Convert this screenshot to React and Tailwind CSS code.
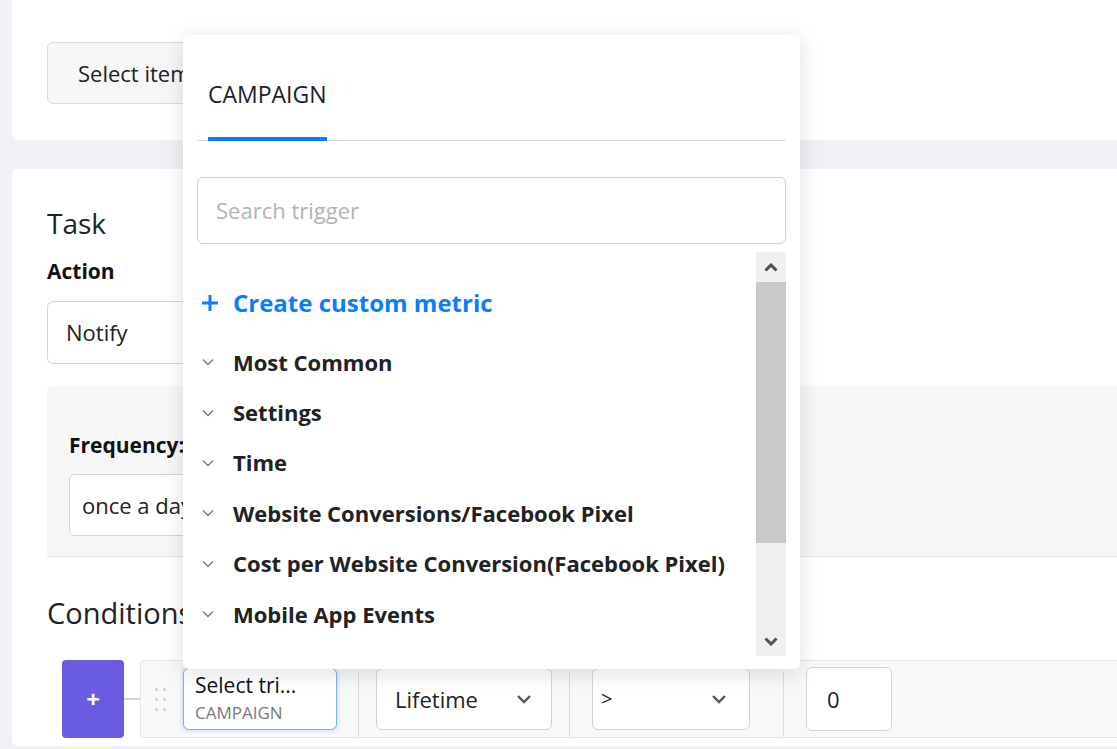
const FONT = { fontFamily: "'Open Sans', 'Noto Sans', sans-serif" };

function Chevron({ className = "" }) {
  return (
    <svg width="12" height="8" viewBox="0 0 12 8" className={className} fill="none" stroke="currentColor" strokeWidth="1.3">
      <polyline points="1 1.5 6 6.5 11 1.5" />
    </svg>
  );
}

function SelectChevron() {
  return (
    <svg width="16" height="10" viewBox="0 0 16 10" fill="none" stroke="#555" strokeWidth="2.4">
      <polyline points="2 2 8 8 14 2" />
    </svg>
  );
}

function ScrollArrow({ up }) {
  return (
    <svg width="14" height="9" viewBox="0 0 14 9" fill="none" stroke="#505050" strokeWidth="3">
      <polyline points={up ? "1.5 7.5 7 2 12.5 7.5" : "1.5 1.5 7 7 12.5 1.5"} />
    </svg>
  );
}

const groups = [
  "Most Common",
  "Settings",
  "Time",
  "Website Conversions/Facebook Pixel",
  "Cost per Website Conversion(Facebook Pixel)",
  "Mobile App Events",
];

function TriggerDropdown() {
  return (
    <div className="absolute left-[183px] top-[35px] w-[617px] h-[634px] bg-white rounded-md shadow-[0_4px_22px_rgba(0,0,0,0.13)] px-[14px] flex flex-col">
      {/* tabs */}
      <div className="border-b border-[#d8d8de] flex">
        <div className="ml-[11px] pt-[44px] pb-[28px] border-b-4 border-[#0a7cff] text-[23px] leading-[30px] text-[#222] -mb-px">
          CAMPAIGN
        </div>
      </div>

      <div className="mt-[36px] h-[67px] border border-[#cfcfd4] rounded-md flex items-center pl-[18px] text-[22px] text-[#b3b3b3]">
        Search trigger
      </div>

      <div className="mt-[8px] h-[404px] flex">
        <div className="flex-1 pt-[26px]">
          <div className="h-[50px] flex items-center pl-[5px] text-[#0a7cff] font-bold text-[24px]">
            <svg width="16" height="16" viewBox="0 0 16 16" stroke="currentColor" strokeWidth="3" className="mr-[15px]">
              <line x1="8" y1="0" x2="8" y2="16" />
              <line x1="0" y1="8" x2="16" y2="8" />
            </svg>
            Create custom metric
          </div>
          <div className="mt-[9px]">
            {groups.map(g => (
              <div key={g} className="h-[50.4px] flex items-center pl-[5px] text-[22px] font-bold text-[#222]">
                <Chevron className="text-[#777] mr-[19px]" />
                {g}
              </div>
            ))}
          </div>
        </div>
        {/* scrollbar */}
        <div className="w-[30px] bg-[#f0f0f0] flex flex-col">
          <div className="h-[30px] flex items-center justify-center"><ScrollArrow up /></div>
          <div className="h-[261px] bg-[#c9c9c9]" />
          <div className="flex-1" />
          <div className="h-[30px] flex items-center justify-center"><ScrollArrow /></div>
        </div>
      </div>
    </div>
  );
}

function SelectBox({ children, className = "" }) {
  return (
    <div className={`h-[62px] bg-white border border-[#d4d4da] rounded-md flex items-center text-[22px] text-[#222] ${className}`}>
      {children}
    </div>
  );
}

export default function App() {
  return (
    <div style={FONT} className="relative w-[1117px] h-[749px] overflow-hidden bg-[#f0f1f5]">
      <div className="pl-[12px]">
        {/* top card */}
        <div className="w-[1130px] h-[140px] bg-white rounded-b-md pl-[35px] pt-[42px]">
          <div className="w-[220px] h-[62px] bg-[#f7f7f8] border border-[#d8d8de] rounded-md flex items-center pl-[30px] text-[22px] text-[#222]">
            Select item...
          </div>
        </div>

        {/* task card */}
        <div className="mt-[29px] w-[1130px] h-[577px] bg-white rounded-md pl-[35px] pt-[37px]">
          <div className="text-[28px] leading-[34px] text-[#222]">Task</div>
          <div className="mt-[18px] text-[21px] leading-[26px] font-bold text-[#111]">Action</div>
          <SelectBox className="mt-[17px] w-[320px] h-[63px] pl-[18px]">Notify</SelectBox>

          <div className="mt-[22px] h-[171px] bg-[#f7f7f8] border-b border-[#e4e4e8] rounded-tl-md pl-[22px] pt-[46px]">
            <div className="text-[21px] leading-[26px] font-bold text-[#111]">Frequency:</div>
            <SelectBox className="w-[300px] mt-[16px] pl-[12px]">once a day</SelectBox>
          </div>

          <div className="mt-[39px] text-[29px] leading-[34px] text-[#222]">Conditions</div>

          <div className="mt-[30px] flex items-stretch">
            <div className="ml-[15px] w-[62px] h-[78px] bg-[#6a5ce0] rounded-[4px] flex items-center justify-center text-white text-[24px] font-bold">
              +
            </div>
            <div className="w-[16px] flex items-center"><div className="w-full h-[2px] bg-[#d3d3da]" /></div>
            <div className="flex-1 h-[78px] bg-[#f8f8f9] border border-[#e5e5ea] rounded-l-[4px] flex items-center">
              <div className="ml-[14px] grid grid-cols-2 gap-x-[5px] gap-y-[7px]">
                {[0, 1, 2, 3, 4, 5].map(i => <div key={i} className="w-[3px] h-[3px] rounded-full bg-[#cfcfd4]" />)}
              </div>
              <div className="ml-[17px] w-[154px] h-[62px] bg-white border border-[#7fb0f0] rounded-md shadow-[0_0_4px_rgba(80,150,240,0.45)] pl-[11px] flex flex-col justify-center">
                <div className="text-[21px] leading-[28px] text-[#111]">Select tri...</div>
                <div className="text-[17px] leading-[28px] text-[#7a7a7a]">CAMPAIGN</div>
              </div>
              <div className="ml-[21px] w-px h-[65px] self-end bg-[#dcdce0]" />
              <SelectBox className="ml-[17px] w-[176px] pl-[18px] pr-[19px] justify-between">
                <span>Lifetime</span>
                <SelectChevron />
              </SelectBox>
              <div className="ml-[17px] w-px h-[65px] self-end bg-[#dcdce0]" />
              <SelectBox className="ml-[22px] w-[158px] pl-[8px] pr-[22px] justify-between">
                <span className="text-[20px]">&gt;</span>
                <SelectChevron />
              </SelectBox>
              <div className="ml-[33px] w-px h-[65px] self-end bg-[#dcdce0]" />
              <div className="ml-[22px] w-[86px] h-[64px] bg-white border border-[#d4d4da] rounded-md flex items-center pl-[20px] text-[22px] text-[#222]">
                0
              </div>
            </div>
          </div>
        </div>
      </div>

      <TriggerDropdown />
    </div>
  );
}
